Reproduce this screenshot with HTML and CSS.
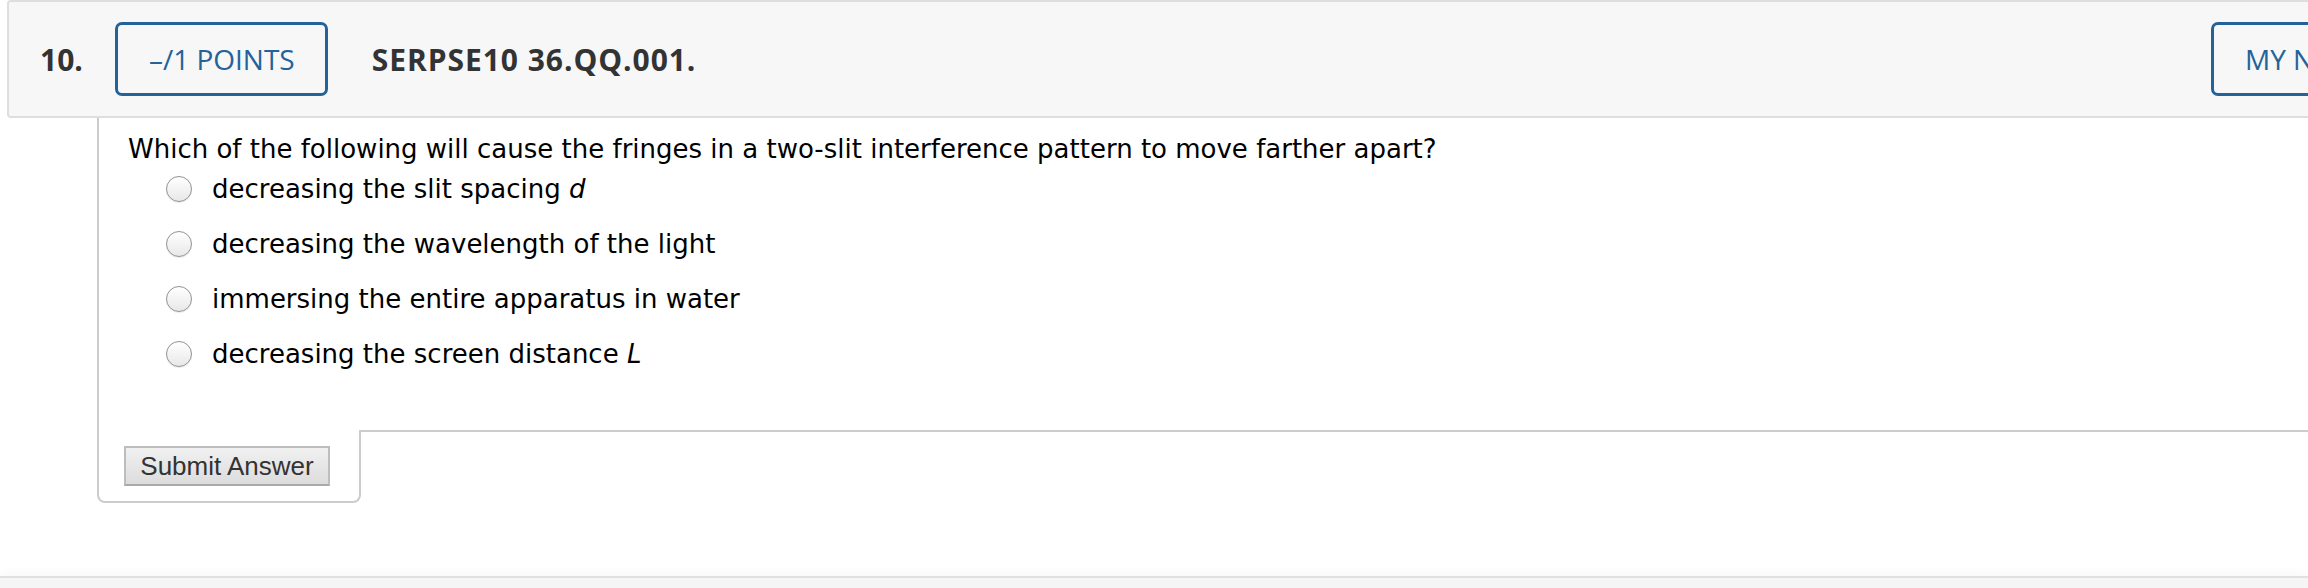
FILE: index.html
```html
<!DOCTYPE html>
<html lang="en">
<head>
<meta charset="utf-8">
<title>Question 10</title>
<link rel="stylesheet" href="styles.css">
</head>
<body>
<div class="page">
  <div class="q-header">
    <span class="q-num">10.</span>
    <span class="q-points">&ndash;/1 POINTS</span>
    <span class="q-title">SERPSE10 36.QQ.001.</span>
    <span class="q-notes">MY NOTES</span>
  </div>
  <div class="q-card">
    <div class="q-body">
      <p class="q-text">Which of the following will cause the fringes in a two-slit interference pattern to move farther apart?</p>
      <ul class="q-options">
        <li class="q-option"><span class="radio"></span><span>decreasing the slit spacing <i>d</i></span></li>
        <li class="q-option"><span class="radio"></span><span>decreasing the wavelength of the light</span></li>
        <li class="q-option"><span class="radio"></span><span>immersing the entire apparatus in water</span></li>
        <li class="q-option"><span class="radio"></span><span>decreasing the screen distance <i>L</i></span></li>
      </ul>
    </div>
    <div class="q-footer">
      <div class="submit-cell"><button class="submit-btn" type="button">Submit Answer</button></div>
      <div class="footer-fill"></div>
    </div>
  </div>
  <div class="next-section"></div>
</div>
</body>
</html>
```
FILE: styles.css
```css
html, body {
  margin: 0;
  padding: 0;
  background: #ffffff;
  overflow: hidden;
}
.page {
  width: 2308px;
  height: 588px;
  overflow: hidden;
}
.q-header {
  box-sizing: border-box;
  width: 2486px;
  height: 118px;
  margin-left: 7px;
  display: flex;
  align-items: center;
  padding: 0 30px 0 31px;
  background: #f7f7f7;
  border: 2px solid #dedede;
  border-radius: 4px;
  font-family: "Open Sans", "Liberation Sans", sans-serif;
  color: #333333;
}
.q-num {
  font-size: 30px;
  font-weight: 700;
  margin-right: 32px;
}
.q-points {
  box-sizing: border-box;
  height: 74px;
  display: flex;
  align-items: center;
  padding: 0 30px 0 31px;
  border: 3px solid #23639a;
  border-radius: 7px;
  font-size: 28px;
  font-weight: 500;
  color: #23639a;
}
.q-title {
  font-size: 30px;
  font-weight: 700;
  letter-spacing: 0.95px;
  margin-left: 44px;
  flex: 1;
}
.q-notes {
  box-sizing: border-box;
  width: 250px;
  height: 74px;
  display: flex;
  align-items: center;
  padding-left: 31px;
  border: 3px solid #23639a;
  border-radius: 7px;
  font-size: 28px;
  font-weight: 500;
  color: #23639a;
}
.q-card {
  margin-left: 97px;
}
.q-body {
  border-left: 2px solid #cccccc;
  padding: 16px 0 61px 29px;
  font-family: Verdana, "DejaVu Sans", sans-serif;
  font-size: 26px;
  color: #000000;
}
.q-text {
  margin: 0;
  line-height: 30px;
}
.q-options {
  list-style: none;
  margin: 10px 0 0 0;
  padding: 0 0 0 38px;
  display: flex;
  flex-direction: column;
  gap: 25px;
}
.q-option {
  display: flex;
  align-items: center;
  line-height: 30px;
  gap: 20px;
}
.radio {
  box-sizing: border-box;
  width: 26px;
  height: 26px;
  border-radius: 50%;
  border: 1.5px solid #929292;
  background: linear-gradient(#ffffff, #e8e8e8);
  box-shadow: 0 1px 1px rgba(0,0,0,0.08);
  flex: none;
}
.q-footer {
  display: flex;
}
.submit-cell {
  box-sizing: border-box;
  width: 264px;
  padding: 16px 0 15px 25px;
  border-left: 2px solid #cccccc;
  border-right: 2px solid #cccccc;
  border-bottom: 2px solid #cccccc;
  border-radius: 0 0 8px 8px;
}
.submit-btn {
  box-sizing: border-box;
  width: 206px;
  height: 40px;
  margin: 0;
  padding: 0;
  font-family: "Liberation Sans", Arial, sans-serif;
  font-size: 26px;
  color: #333333;
  background: linear-gradient(#f1f1f1, #dcdcdc);
  border: 2px solid #bdbdbd;
  border-bottom-color: #a9a9a9;
  border-radius: 0;
  display: block;
}
.footer-fill {
  flex: 1;
  border-top: 2px solid #cccccc;
}
.next-section {
  margin-top: 73px;
  height: 20px;
  border-top: 2px solid #e0e0e0;
  background: #f5f5f5;
  box-shadow: 0 -5px 8px rgba(0, 0, 0, 0.025);
}
```
